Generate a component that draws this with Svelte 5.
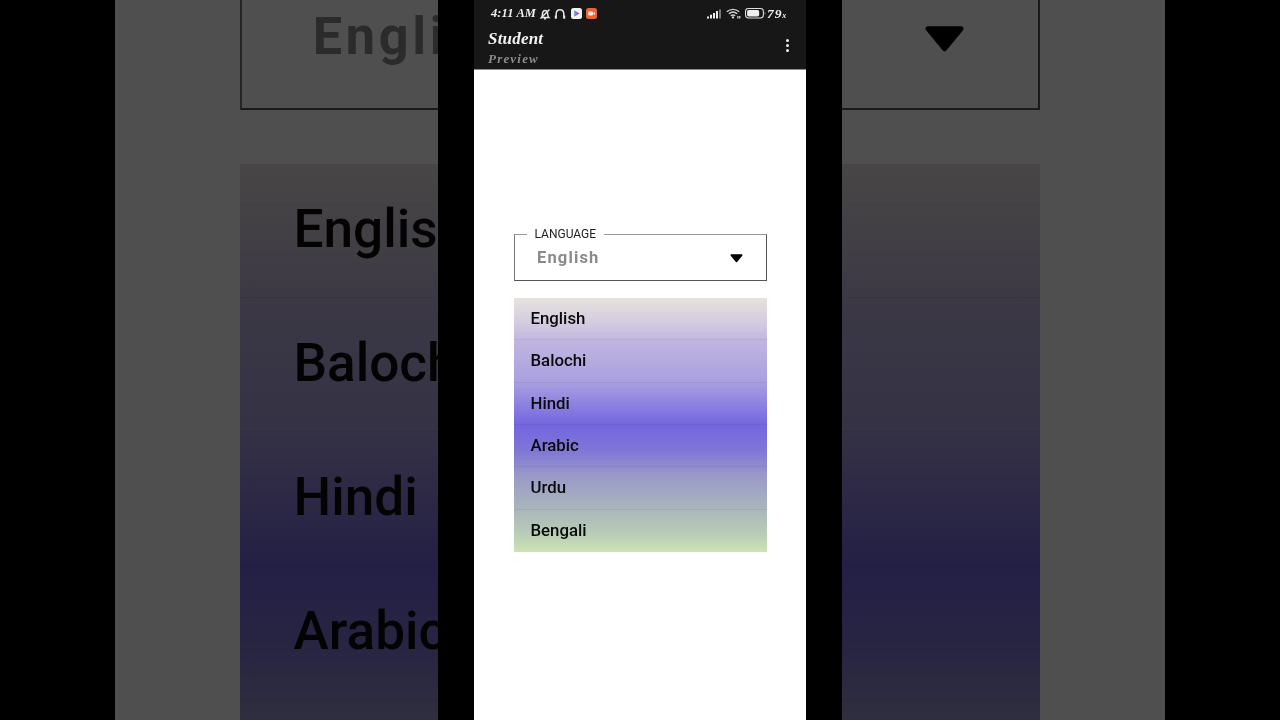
<script>
  const languages = ['English', 'Balochi', 'Hindi', 'Arabic', 'Urdu', 'Bengali'];
</script>

{#snippet panel()}
  <fieldset class="select">
    <legend>LANGUAGE</legend>
    <span class="value">English</span>
    <svg class="arrow" viewBox="0 0 14 10" aria-hidden="true">
      <path d="M1.2 .4H12.8C13.6 .4 14 1.3 13.4 1.9L7.7 8.9C7.3 9.4 6.7 9.4 6.3 8.9L.6 1.9C0 1.3 .4 .4 1.2 .4Z" />
    </svg>
  </fieldset>
  <ul class="options">
    {#each languages as language}
      <li>{language}</li>
    {/each}
  </ul>
{/snippet}

<div class="stage">
  <div class="backdrop">
    <div class="panel large">
      {@render panel()}
    </div>
  </div>

  <div class="frame">
    <main class="phone">
      <header class="appbar">
        <div class="status">
          <span class="clock">4:11 AM</span>
          <svg class="ic bell" viewBox="0 0 12 12" aria-hidden="true">
            <path d="M2.5 9.5C3.5 8.5 3.3 6.5 3.6 5 4 3.2 5 2.4 6 2.4S8.2 3.2 8.500 5C8.800 6.500 8.800 8.500 9.800 9.500H2.500ZM5 10.800H7M1.500 10.500 10.500 1.500" />
          </svg>
          <svg class="ic phones" viewBox="0 0 12 12" aria-hidden="true">
            <path d="M2.200 9.500V6C2.200 3.500 3.800 1.700 6 1.700S9.800 3.500 9.800 6V9.500" />
            <path class="fill" d="M.8 7.500H2.800V10.800H.8ZM9.200 7.500H11.200V10.800H9.200Z" />
          </svg>
          <svg class="app" viewBox="0 0 11 11" aria-hidden="true">
            <rect width="11" height="11" rx="2.500" fill="#f2f2f2" />
            <path d="M3.500 2.500 8.500 5.500 3.500 8.500Z" fill="#8a5cc8" />
            <path d="M3.500 2.500 6 5.500 3.500 8.500Z" fill="#4f9fe0" />
          </svg>
          <svg class="app" viewBox="0 0 11 11" aria-hidden="true">
            <rect width="11" height="11" rx="2.500" fill="#e8643a" />
            <rect x="2.200" y="3.500" width="4.800" height="4" rx="1" fill="#fbe4d8" />
            <path d="M7.400 5 9 4V7L7.400 6Z" fill="#fbe4d8" />
          </svg>
          <span class="spacer"></span>
          <svg class="signal" viewBox="0 0 15 10" aria-hidden="true">
            <rect x="0" y="7.500" width="2" height="2" fill="#eee" />
            <rect x="3" y="5.700" width="2" height="3.800" fill="#eee" />
            <rect x="6" y="4" width="2" height="5.500" fill="#eee" />
            <rect x="9" y="2" width="2" height="7.500" fill="#eee" />
            <rect x="12" y=".5" width="2" height="9" fill="#777" />
          </svg>
          <svg class="wifi" viewBox="0 0 15 11" aria-hidden="true">
            <path d="M.8 3.800C4.500 .5 9.500 .5 13.200 3.800M2.800 5.800C5.300 3.700 8.700 3.700 11.200 5.800M4.800 7.800C6.200 6.700 7.800 6.700 9.200 7.800" />
            <circle cx="7" cy="9.400" r="1.100" fill="#ddd" stroke="none" />
            <rect x="11.300" y="8" width="1.200" height="2.500" fill="#ddd" stroke="none" />
            <rect x="13.200" y="8" width="1.200" height="2.500" fill="#ddd" stroke="none" />
          </svg>
          <svg class="battery" viewBox="0 0 20 10" aria-hidden="true">
            <rect x=".5" y=".5" width="17" height="9" rx="2.800" fill="none" stroke="#ddd" />
            <rect x="2" y="2" width="11.500" height="6" rx="1.500" fill="#eee" />
            <path d="M18.800 3.500C19.500 3.800 19.500 6.200 18.800 6.500Z" fill="#ddd" />
          </svg>
          <span class="level">79<small>x</small></span>
        </div>
        <div class="titlebar">
          <div class="titles">
            <h1>Student</h1>
            <p>Preview</p>
          </div>
          <div class="more" aria-hidden="true"><i></i><i></i><i></i></div>
        </div>
      </header>
      <div class="panel">
        {@render panel()}
      </div>
    </main>
  </div>
</div>

<style>
  :global(body) {
    margin: 0;
    background: #000;
  }

  .stage {
    display: grid;
    justify-content: center;
    width: 1280px;
    height: 720px;
    overflow: hidden;
    background: #000;
    font-family: Roboto, "Liberation Sans", sans-serif;
  }

  .backdrop,
  .frame {
    grid-area: 1 / 1;
    justify-self: center;
    height: 720px;
  }

  .backdrop {
    width: 1050px;
    background: #fff;
    overflow: hidden;
    filter: brightness(0.31) blur(0.5px);
  }

  .frame {
    z-index: 1;
    width: 332px;
    padding: 0 36px;
    background: #000;
  }

  .phone {
    height: 720px;
    background: #fff;
    overflow: hidden;
    filter: blur(0.3px);
  }

  .appbar {
    height: 69px;
    background: #171717;
    border-bottom: 1px solid #8d8d8d;
    color: #f2f2f2;
    font-family: "Liberation Serif", serif;
    font-style: italic;
    font-weight: 700;
  }

  .status {
    display: flex;
    align-items: center;
    height: 24px;
    padding: 3px 19px 0 17px;
    box-sizing: border-box;
    font-size: 12.5px;
  }

  .clock {
    width: 48px;
    color: #eee;
    letter-spacing: 0.1px;
  }

  .ic {
    width: 12px;
    height: 12px;
    margin-right: 3px;
    fill: none;
    stroke: #e4e4e4;
    stroke-width: 1.500;
  }

  .phones .fill {
    fill: #e4e4e4;
    stroke: none;
  }

  .app {
    width: 11px;
    height: 11px;
    margin-left: 4px;
  }

  .phones + .app {
    margin-left: 2px;
  }

  .spacer {
    flex: 1;
  }

  .signal {
    width: 15px;
    height: 10px;
    margin-right: 4px;
  }

  .wifi {
    width: 15px;
    height: 11px;
    margin-right: 4px;
    fill: none;
    stroke: #ccc;
    stroke-width: 1.400;
  }

  .battery {
    width: 21px;
    height: 10.500px;
    margin-right: 1px;
  }

  .level {
    font-size: 13.500px;
    letter-spacing: 0.8px;
  }

  .level small {
    font-size: 8px;
  }

  .titlebar {
    display: flex;
    align-items: center;
    justify-content: space-between;
    padding: 5px 17px 0 14px;
  }

  h1 {
    margin: 0;
    font-size: 17px;
    line-height: 20px;
    letter-spacing: 0.2px;
  }

  p {
    margin: 1px 0 0;
    font-size: 13px;
    line-height: 18px;
    letter-spacing: 1.2px;
    color: #8b8b8b;
  }

  .more {
    display: flex;
    flex-direction: column;
    gap: 2px;
    margin-bottom: 6px;
  }

  .more i {
    display: block;
    width: 3px;
    height: 3px;
    border-radius: 50%;
    background: #eee;
  }

  .panel {
    --s: 1;
    --top: 157px;
    width: calc(253px * var(--s));
    margin: var(--top) auto 0;
  }

  .panel.large {
    --s: 3.165;
    --top: -61px;
  }

  .select {
    display: flex;
    align-items: center;
    justify-content: space-between;
    height: calc(54px * var(--s));
    margin: 0;
    padding: 0 calc(23px * var(--s)) calc(6px * var(--s)) calc(22.500px * var(--s));
    box-sizing: border-box;
    min-width: 0;
    border: calc(1px * var(--s) * 0.7) solid #777;
    border-top-color: #999;
    border-right-color: #555;
    border-bottom-color: #555;
  }

  legend {
    margin-left: calc(-10.500px * var(--s));
    padding: 0 calc(8px * var(--s));
    font-size: calc(12px * var(--s));
    line-height: calc(14px * var(--s));
    color: #222;
  }

  .value {
    font-size: calc(16.500px * var(--s));
    font-weight: 700;
    letter-spacing: calc(1.150px * var(--s));
    color: #8a8a8a;
  }

  .arrow {
    width: calc(13px * var(--s));
    height: calc(9px * var(--s));
    margin-top: calc(2px * var(--s));
    fill: #000;
  }

  .options {
    display: grid;
    grid-auto-rows: calc(254px * var(--s) / 6);
    margin: calc(17px * var(--s)) 0 0;
    padding: 0;
    list-style: none;
    background: linear-gradient(
      #e7e2dd 0%,
      #d3cbe0 10%,
      #c0b5df 17%,
      #a9a0e0 33%,
      #7465e0 50%,
      #7f76d6 60%,
      #9a99c7 70%,
      #a8b4bd 82%,
      #b9cdb6 93%,
      #cde4b0 100%
    );
  }

  li {
    display: flex;
    align-items: center;
    padding-left: calc(17px * var(--s));
    padding-bottom: calc(1px * var(--s));
    box-sizing: border-box;
    font-size: calc(16.800px * var(--s));
    font-weight: 500;
    color: #0a0a0a;
    border-bottom: calc(1px * var(--s) * 0.6) solid rgba(50, 40, 90, 0.08);
  }

  li:last-child {
    border-bottom: 0;
  }
</style>
